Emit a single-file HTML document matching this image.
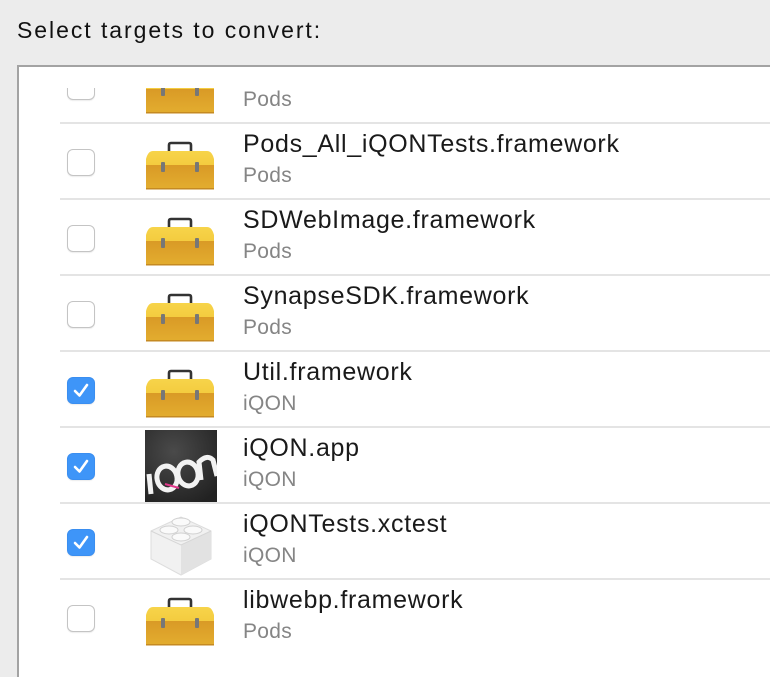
<!DOCTYPE html>
<html><head><meta charset="utf-8"><style>
body{margin:0;width:770px;height:664px;overflow:hidden;background:#ececec;font-family:"Liberation Sans",sans-serif;position:relative}
.hdr{position:absolute;left:17px;top:17px;font-size:23px;letter-spacing:1.95px;color:#111}
.list{position:absolute;left:17px;top:65px;width:760px;height:610px;background:#fff;border-left:2px solid #a3a3a3;border-top:2px solid #a3a3a3;overflow:hidden}
.row{position:absolute;left:0;width:760px;height:76px}
.sep{position:absolute;left:41px;right:0;bottom:0;height:2px;background:#e4e4e4}
.cb{position:absolute;left:48px;top:25px;width:26px;height:25px;border:1px solid #c4c4c4;border-radius:6px;background:#fff;box-shadow:0 1px 1px rgba(0,0,0,.08)}
.cb.on{background:#3e95f8;border-color:#3a8ef0}
.cb.on svg{position:absolute;left:4px;top:4px}
.ic{position:absolute;left:126px;top:17px}
.t{position:absolute;left:224px;top:6px;font-size:25px;letter-spacing:0.7px;color:#1a1a1a;white-space:nowrap}
.s{position:absolute;left:224px;top:40px;font-size:21px;letter-spacing:0.3px;color:#858585}
.cover{position:absolute;left:0;top:0;width:760px;height:21px;background:#fff}
</style></head><body>
<div class="hdr">Select targets to convert:</div>
<div class="list">
<svg width="0" height="0" style="position:absolute"><defs>
<linearGradient id="lid" x1="0" y1="0" x2="0" y2="1"><stop offset="0" stop-color="#f7d44a"/><stop offset="1" stop-color="#eebd2c"/></linearGradient>
<linearGradient id="bot" x1="0" y1="0" x2="0" y2="1"><stop offset="0" stop-color="#d99a26"/><stop offset="1" stop-color="#e3ad2f"/></linearGradient>
<symbol id="tb" viewBox="0 0 70 50"><path d="M24 10 V4 Q24 2 26 2 H44 Q46 2 46 4 V10" fill="none" stroke="#333" stroke-width="2.6"/><path d="M8 10 H62 Q67 10 69 18 V48 H1 V18 Q3 10 8 10Z" fill="url(#lid)"/><rect x="1" y="24" width="68" height="24" fill="url(#bot)"/><rect x="1" y="47" width="68" height="1.5" fill="#c58a22"/><rect x="16" y="21" width="4" height="10" rx="1" fill="#777"/><rect x="50" y="21" width="4" height="10" rx="1" fill="#777"/></symbol>
</defs></svg>
<div class="row" style="top:-19px"><div class="cb"></div><svg class="ic" width="70" height="50"><use href="#tb"/></svg><div class="s">Pods</div><div class="sep"></div></div>
<div class="cover"></div>
<div class="row" style="top:57px"><div class="cb"></div><svg class="ic" width="70" height="50"><use href="#tb"/></svg><div class="t">Pods_All_iQONTests.framework</div><div class="s">Pods</div><div class="sep"></div></div>
<div class="row" style="top:133px"><div class="cb"></div><svg class="ic" width="70" height="50"><use href="#tb"/></svg><div class="t">SDWebImage.framework</div><div class="s">Pods</div><div class="sep"></div></div>
<div class="row" style="top:209px"><div class="cb"></div><svg class="ic" width="70" height="50"><use href="#tb"/></svg><div class="t">SynapseSDK.framework</div><div class="s">Pods</div><div class="sep"></div></div>
<div class="row" style="top:285px"><div class="cb on"><svg width="18" height="17"><path d="M3 9 L7.5 13.5 L15 3" fill="none" stroke="#fff" stroke-width="2.6" stroke-linecap="round" stroke-linejoin="round"/></svg></div><svg class="ic" width="70" height="50"><use href="#tb"/></svg><div class="t">Util.framework</div><div class="s">iQON</div><div class="sep"></div></div>
<div class="row" style="top:361px"><div class="cb on"><svg width="18" height="17"><path d="M3 9 L7.5 13.5 L15 3" fill="none" stroke="#fff" stroke-width="2.6" stroke-linecap="round" stroke-linejoin="round"/></svg></div>
<svg class="ic" style="top:2px" width="72" height="72"><defs><radialGradient id="dk" cx="0.4" cy="0.3" r="0.8"><stop offset="0" stop-color="#4a4a4a"/><stop offset="1" stop-color="#222"/></radialGradient></defs><rect width="72" height="72" fill="url(#dk)"/><g fill="none" stroke="#f2f2f2" stroke-width="5"><path d="M4 44 L6 64"/><ellipse cx="22" cy="48" rx="10" ry="12" transform="rotate(-12 22 48)"/><ellipse cx="43" cy="44" rx="10" ry="12" transform="rotate(-12 43 44)"/><path d="M56 50 L54 32 Q62 24 68 30 L72 46"/></g><path d="M20 54 L34 58" stroke="#e0388a" stroke-width="2"/></svg>
<div class="t">iQON.app</div><div class="s">iQON</div><div class="sep"></div></div>
<div class="row" style="top:437px"><div class="cb on"><svg width="18" height="17"><path d="M3 9 L7.5 13.5 L15 3" fill="none" stroke="#fff" stroke-width="2.6" stroke-linecap="round" stroke-linejoin="round"/></svg></div>
<svg class="ic" style="left:128px;top:5px" width="68" height="68"><path d="M4 22 L34 8 L64 22 V50 L34 66 L4 50Z" fill="#f1f1f1" stroke="#ddd"/><path d="M34 36 V66 L64 50 V22Z" fill="#e2e2e2"/><path d="M4 22 L34 36 L64 22" fill="none" stroke="#d6d6d6"/><g fill="#fafafa" stroke="#d0d0d0"><ellipse cx="34" cy="13" rx="9" ry="4"/><ellipse cx="22" cy="21" rx="9" ry="4"/><ellipse cx="46" cy="21" rx="9" ry="4"/><ellipse cx="34" cy="28" rx="9" ry="4"/></g></svg>
<div class="t">iQONTests.xctest</div><div class="s">iQON</div><div class="sep"></div></div>
<div class="row" style="top:513px"><div class="cb"></div><svg class="ic" width="70" height="50"><use href="#tb"/></svg><div class="t">libwebp.framework</div><div class="s">Pods</div></div>
</div>
</body></html>
